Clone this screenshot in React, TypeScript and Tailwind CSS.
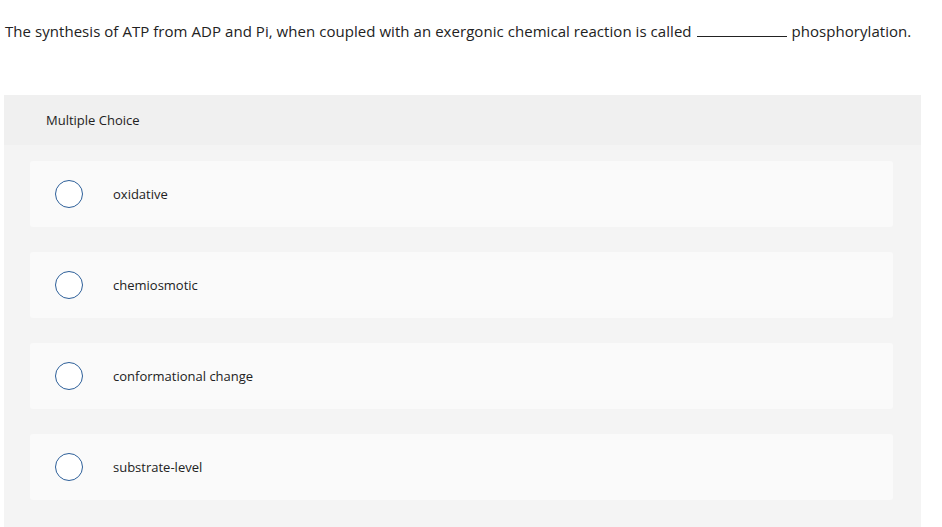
import React from 'react';

const options = ['oxidative', 'chemiosmotic', 'conformational change', 'substrate-level'];

export default function App() {
  return (
    <div className="min-h-[527px] bg-white text-[#222]" style={{ fontFamily: '"Open Sans", sans-serif' }}>
      <div className="pl-[5px] pt-[21px] h-[95px] text-[15px] leading-[20px] tracking-[0.05px]">
        The synthesis of ATP from ADP and Pi, when coupled with an exergonic chemical reaction is called{' '}
        <span className="inline-block w-[90px] border-b border-[#222] align-baseline mx-[1px]" />{' '}
        phosphorylation.
      </div>
      <div className="ml-[4px] w-[917px]">
        <div className="h-[50px] bg-[#f0f0f0] flex items-center pl-[42px] pt-[2px] text-[13px]">Multiple Choice</div>
        <div className="bg-[#f4f4f4] pt-[16px] pb-[30px] pl-[26px] pr-[28px] flex flex-col gap-[25px]">
          {options.map(opt => (
            <div key={opt} className="h-[66px] bg-[#fafafa] rounded-[3px] flex items-center">
              <span className="ml-[25px] w-[28px] h-[28px] rounded-full border-[1.5px] border-[#2d5f99] bg-white shrink-0" />
              <span className="ml-[30px] pt-[2px] text-[13px]">{opt}</span>
            </div>
          ))}
        </div>
      </div>
    </div>
  );
}
